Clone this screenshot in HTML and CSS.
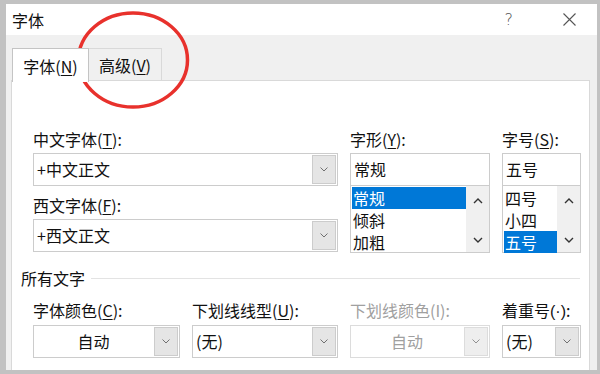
FILE: index.html
```html
<!DOCTYPE html>
<html>
<head>
<meta charset="utf-8">
<link rel="stylesheet" href="styles.css">
</head>
<body>

<div class="dialog">
  <div class="titlebar">
    <span class="title">字体</span>
    <span class="help">?</span>
    <svg class="close" width="13" height="13" viewBox="0 0 13 13"><path d="M0.5 0.5L12.5 12.5M12.5 0.5L0.5 12.5" stroke="#555" stroke-width="1.1" fill="none"/></svg>
  </div>

  <div class="content">
    <div class="tabs">
      <div class="tab active">字体(<u>N</u>)</div>
      <div class="tab">高级(<u>V</u>)</div>
    </div>

    <div class="panel">
      <div class="fonts">
        <div class="label cn-label">中文字体(<u>T</u>):</div>
        <div class="combo cn-combo">
          <span class="value">+中文正文</span>
          <span class="drop"><svg width="8" height="5" viewBox="0 0 8 5"><path d="M0.5 0.5L4 4L7.5 0.5" stroke="#707070" fill="none"/></svg></span>
        </div>
        <div class="label west-label">西文字体(<u>F</u>):</div>
        <div class="combo west-combo">
          <span class="value">+西文正文</span>
          <span class="drop"><svg width="8" height="5" viewBox="0 0 8 5"><path d="M0.5 0.5L4 4L7.5 0.5" stroke="#707070" fill="none"/></svg></span>
        </div>

        <div class="label style-label">字形(<u>Y</u>):</div>
        <div class="textbox style-box">常规</div>
        <div class="listbox style-list">
          <div class="items">
            <div class="item selected">常规</div>
            <div class="item">倾斜</div>
            <div class="item">加粗</div>
          </div>
          <div class="scroll">
            <svg width="10" height="6" viewBox="0 0 10 6"><path d="M1 5L5 1L9 5" stroke="#333" stroke-width="1.4" fill="none"/></svg>
            <svg width="10" height="6" viewBox="0 0 10 6"><path d="M1 1L5 5L9 1" stroke="#333" stroke-width="1.4" fill="none"/></svg>
          </div>
        </div>

        <div class="label size-label">字号(<u>S</u>):</div>
        <div class="textbox size-box">五号</div>
        <div class="listbox size-list">
          <div class="items">
            <div class="item">四号</div>
            <div class="item">小四</div>
            <div class="item selected">五号</div>
          </div>
          <div class="scroll">
            <svg width="10" height="6" viewBox="0 0 10 6"><path d="M1 5L5 1L9 5" stroke="#333" stroke-width="1.4" fill="none"/></svg>
            <svg width="10" height="6" viewBox="0 0 10 6"><path d="M1 1L5 5L9 1" stroke="#333" stroke-width="1.4" fill="none"/></svg>
          </div>
        </div>
      </div>

      <div class="group">
        <span>所有文字</span>
        <div class="rule"></div>
      </div>

      <div class="effects">
        <div class="label">字体颜色(<u>C</u>):</div>
        <div class="label">下划线线型(<u>U</u>):</div>
        <div class="label disabled">下划线颜色(I):</div>
        <div class="label">着重号<span class="latin">(·)</span>:</div>

        <div class="combo">
          <span class="value center">自动</span>
          <span class="drop"><svg width="8" height="5" viewBox="0 0 8 5"><path d="M0.5 0.5L4 4L7.5 0.5" stroke="#707070" fill="none"/></svg></span>
        </div>
        <div class="combo">
          <span class="value">(无)</span>
          <span class="drop"><svg width="8" height="5" viewBox="0 0 8 5"><path d="M0.5 0.5L4 4L7.5 0.5" stroke="#707070" fill="none"/></svg></span>
        </div>
        <div class="combo off">
          <span class="value center">自动</span>
          <span class="drop"><svg width="8" height="5" viewBox="0 0 8 5"><path d="M0.5 0.5L4 4L7.5 0.5" stroke="#909090" fill="none"/></svg></span>
        </div>
        <div class="combo">
          <span class="value">(无)</span>
          <span class="drop"><svg width="8" height="5" viewBox="0 0 8 5"><path d="M0.5 0.5L4 4L7.5 0.5" stroke="#707070" fill="none"/></svg></span>
        </div>
      </div>
    </div>
  </div>

  <!-- hand drawn red mark round the second tab -->
  <svg class="mark" width="124" height="108" viewBox="0 0 124 108">
    <ellipse cx="62" cy="54" rx="54.5" ry="47" stroke="#e8312c" stroke-width="3.5" fill="none"/>
  </svg>
</div>

</body>
</html>
```

FILE: styles.css
```css
body {
    margin: 0;
    background-color: #c2c2c2;
    font-family: "Noto Sans CJK SC", "Microsoft YaHei", sans-serif;
    font-size: 16px;
    color: #111;
}

u {
    text-decoration-thickness: 1px;
    text-underline-offset: 2px;
}

.latin {
    font-family: "Liberation Sans", sans-serif;
}

/* Dialog frame */
.dialog {
    position: relative;
    margin: 4px 3px 0 6px;
    height: 366px;
    background-color: #f0f0f0;
    overflow: hidden;
}

.titlebar {
    display: flex;
    align-items: center;
    height: 31px;
    padding: 0 21px 0 6px;
    background-color: #fff;
}

.title {
    line-height: 22px;
}

.help {
    margin-left: auto;
    margin-right: 50px;
    color: #555;
    font-family: "DejaVu Sans", sans-serif;
    font-size: 16px;
    font-weight: 300;
}

/* Tabs */
.content {
    padding: 13px 7px 0 5px;
}

.tabs {
    display: flex;
    height: 32px;
    padding-left: 1px;
}

.tab {
    display: flex;
    align-items: center;
    justify-content: center;
    width: 72px;
    height: 31px;
    border: 1px solid #d9d9d9;
    border-bottom: none;
    background-color: #f0f0f0;
    line-height: 22px;
}

.tab.active {
    position: relative;
    z-index: 1;
    width: 75px;
    height: 33px;
    margin-right: -1px;
    background-color: #fff;
    border-color: #c4c4c4;
}

/* Panel */
.panel {
    height: 300px;
    padding: 47px 9px 0 9px;
    border: 1px solid #d9d9d9;
    background-color: #fff;
}

.label {
    line-height: 22px;
    white-space: nowrap;
}

.label.disabled {
    color: #a0a0a0;
}

.fonts {
    display: grid;
    grid-template-columns: 147px 146px 140px 79px;
    grid-template-rows: 25px 33px 33px 34px;
    column-gap: 12px;
    padding-left: 12px;
}

.cn-label { grid-column: 1 / 3; grid-row: 1; }
.cn-combo { grid-column: 1 / 3; grid-row: 2; }
.west-label { grid-column: 1 / 3; grid-row: 3; margin-top: 8px; }
.west-combo { grid-column: 1 / 3; grid-row: 4; height: 33px; }
.style-label { grid-column: 3; grid-row: 1; }
.style-box { grid-column: 3; grid-row: 2; }
.style-list { grid-column: 3; grid-row: 3 / 5; }
.size-label { grid-column: 4; grid-row: 1; }
.size-box { grid-column: 4; grid-row: 2; }
.size-list { grid-column: 4; grid-row: 3 / 5; }

/* Combo boxes */
.combo {
    display: flex;
    height: 33px;
    box-sizing: border-box;
    border: 1px solid #cccccc;
    background-color: #fff;
}

.combo .value {
    flex: 1;
    padding-left: 3px;
    line-height: 30px;
    white-space: nowrap;
}

.combo .value.center {
    text-align: center;
    padding-left: 0;
}

.combo .drop {
    display: flex;
    align-items: center;
    justify-content: center;
    width: 22px;
    margin: 1px;
    border: 1px solid #cccccc;
    background-color: #e5e5e5;
}

.combo.off {
    border-color: #dcdcdc;
    color: #a0a0a0;
}

.combo.off .drop {
    background-color: #eeeeee;
    border-color: #dcdcdc;
}

.textbox {
    box-sizing: border-box;
    height: 33px;
    padding-left: 3px;
    border: 1px solid #cccccc;
    line-height: 30px;
}

/* List boxes */
.listbox {
    display: flex;
    box-sizing: border-box;
    height: 67px;
    border: 1px solid #cccccc;
    border-top: none;
}

.listbox .items {
    flex: 1;
    padding: 1px 0 0 1px;
}

.listbox .item {
    height: 22px;
    padding-left: 1px;
    line-height: 22px;
}

.listbox .item.selected {
    background-color: #0078d7;
    color: #fff;
}

.listbox .scroll {
    display: flex;
    flex-direction: column;
    justify-content: space-between;
    align-items: center;
    width: 23px;
    padding: 12px 0 9px;
    background-color: #f0f0f0;
}

/* All text group */
.group {
    display: flex;
    align-items: center;
    margin-top: 14px;
    line-height: 22px;
}

.group .rule {
    flex: 1;
    height: 1px;
    margin-left: 6px;
    background-color: #e3e3e3;
}

.effects {
    display: grid;
    grid-template-columns: 147px 146px 140px 79px;
    grid-template-rows: 22px 33px;
    column-gap: 12px;
    row-gap: 4px;
    margin-top: 10px;
    padding-left: 12px;
}

/* Red mark over the tabs */
.mark {
    position: absolute;
    left: 65px;
    top: 2px;
}
```
